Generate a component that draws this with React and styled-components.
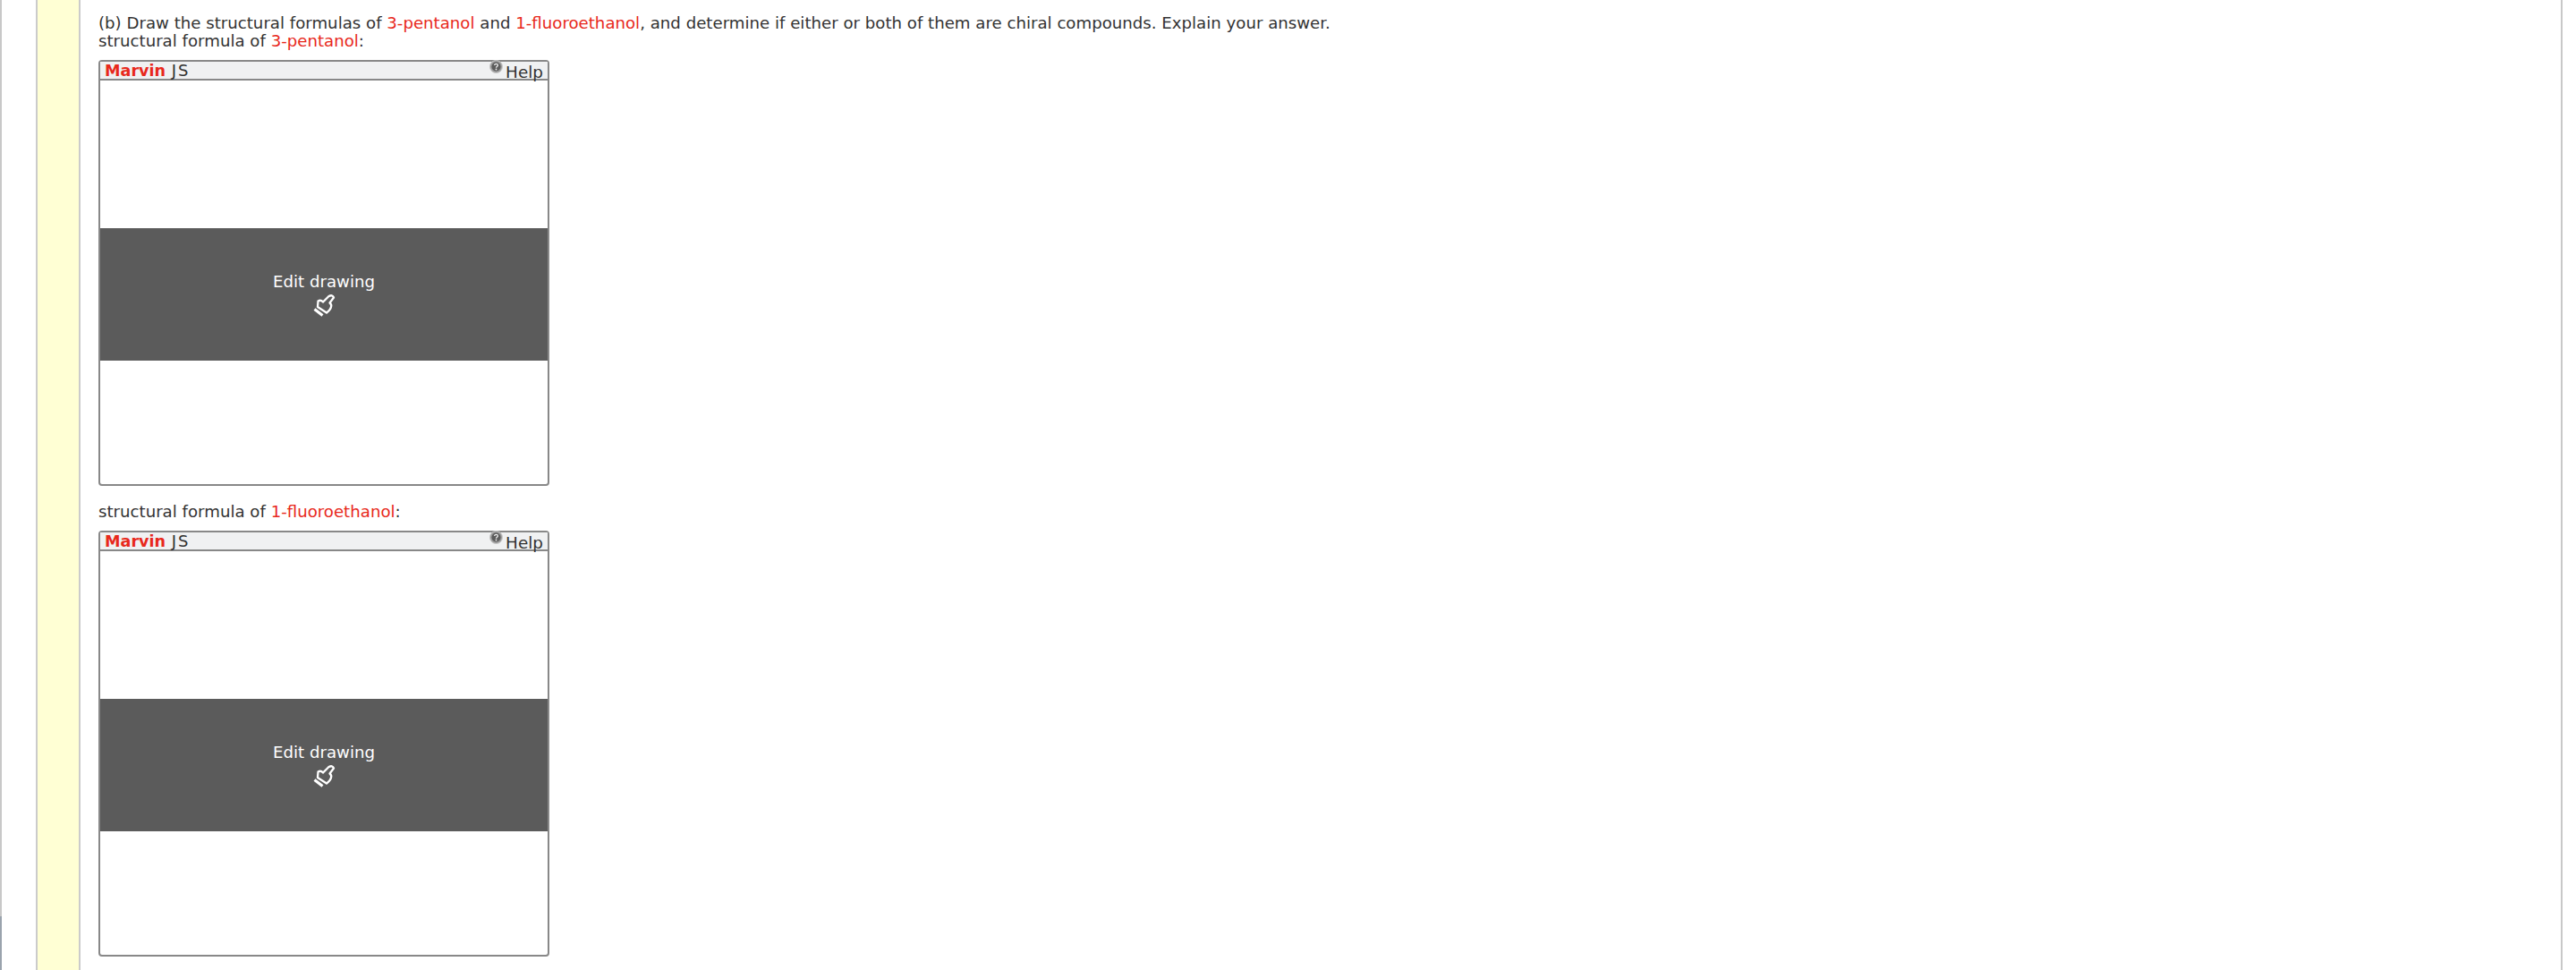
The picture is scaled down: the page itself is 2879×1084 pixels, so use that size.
import styled, { createGlobalStyle } from 'styled-components'

const GlobalStyle = createGlobalStyle`
  html, body {
    margin: 0;
    padding: 0;
    background: #fff;
  }
`

const HelpIcon = () => (
  <StyledHelpSvg viewBox="0 0 15 15">
    <circle cx="7.5" cy="7.5" r="7" fill="#9a9a9a" stroke="#c8c8c8" strokeWidth="1" />
    <circle cx="7.5" cy="7.5" r="5" fill="#5c5c5c" />
    <path d="M5.700 6c0-2.200 3.700-2.200 3.700 0 0 1.300-1.900 1.300-1.900 2.700" fill="none" stroke="#eee" strokeWidth="1.300" />
    <circle cx="7.500" cy="10.500" r="0.900" fill="#eee" />
  </StyledHelpSvg>
)

const HandIcon = () => (
  <StyledHandSvg viewBox="0 0 32 32">
    <path
      d="M9 18 L9.500 11.500 Q12.500 9.500 15 12.500 L21.500 6 Q25.500 4 27 7.500 L22.500 13.500 Q25 15.500 24 18 Q23.500 21 19 24.500 Z"
      fill="none"
      stroke="#fff"
      strokeWidth="2.300"
      strokeLinejoin="round"
    />
    <path d="M5.500 20.500 L14.500 27.500" fill="none" stroke="#fff" strokeWidth="3.200" />
  </StyledHandSvg>
)

const MarvinBox = () => (
  <StyledBox>
    <StyledHeader>
      <StyledBrand>
        <strong>Marvin</strong> <StyledJs>JS</StyledJs>
      </StyledBrand>
      <StyledHelp>
        <HelpIcon />
        <span>Help</span>
      </StyledHelp>
    </StyledHeader>
    <StyledCanvas>
      <StyledEdit>
        <span>Edit drawing</span>
        <HandIcon />
      </StyledEdit>
    </StyledCanvas>
  </StyledBox>
)

const App = () => {
  return (
    <StyledPage>
      <GlobalStyle />
      <StyledGutter />
      <StyledSidebar />
      <StyledContent>
        <StyledText>
          (b) Draw the structural formulas of <StyledRed>3-pentanol</StyledRed> and{' '}
          <StyledRed>1-fluoroethanol</StyledRed>, and determine if either or both of them are chiral
          compounds. Explain your answer.
          <br />
          structural formula of <StyledRed>3-pentanol</StyledRed>:
        </StyledText>
        <MarvinBox />
        <StyledLabel>
          structural formula of <StyledRed>1-fluoroethanol</StyledRed>:
        </StyledLabel>
        <MarvinBox />
      </StyledContent>
    </StyledPage>
  )
}

export default App

const StyledPage = styled.div`
  display: flex;
  width: 2879px;
  height: 1084px;
  overflow: hidden;
  background: #fff;
  font-family: 'DejaVu Sans', Verdana, sans-serif;
  color: #333;
`

const StyledGutter = styled.div`
  width: 40px;
  flex-shrink: 0;
  background: linear-gradient(#c8c8c8, #c8c8c8) 0 0 / 2px 1024px no-repeat,
    linear-gradient(#9aa3ad, #9aa3ad) 0 1024px / 2px 60px no-repeat;
`

const StyledSidebar = styled.div`
  width: 46px;
  flex-shrink: 0;
  background: #ffffd4;
  border-left: 2px solid #cbcbcb;
  border-right: 2px solid #cbcbcb;
`

const StyledContent = styled.div`
  width: 2774px;
  padding: 16px 0 0 20px;
  border-right: 2px solid #c8c8c8;
  box-sizing: border-box;
  flex-shrink: 0;
`

const StyledText = styled.div`
  font-size: 18.17px;
  line-height: 20px;
`

const StyledLabel = styled(StyledText)`
  margin: 19px 0 11px;
`

const StyledRed = styled.span`
  color: #e8291c;
`

const StyledBox = styled.div`
  width: 504px;
  height: 476px;
  margin-top: 11px;
  border: 2px solid #888;
  border-radius: 4px;
  box-sizing: border-box;
  display: flex;
  flex-direction: column;
  background: #fff;
`

const StyledHeader = styled.div`
  height: 19px;
  flex-shrink: 0;
  display: flex;
  align-items: flex-start;
  justify-content: space-between;
  padding: 0 5px;
  background: #f0f1f2;
  border-bottom: 2px solid #888;
`

const StyledBrand = styled.div`
  font-size: 17.6px;
  line-height: 20px;
  word-spacing: 1px;

  strong {
    color: #e8291c;
  }
`

const StyledJs = styled.span`
  font-size: 18px;
  letter-spacing: 2px;
`

const StyledHelp = styled.div`
  display: flex;
  align-items: flex-start;
  gap: 3px;
  font-size: 18.4px;
  line-height: 23px;
`

const StyledHelpSvg = styled.svg`
  width: 15px;
  height: 15px;
  margin-top: -2px;
`

const StyledCanvas = styled.div`
  flex: 1;
  padding-top: 165px;
`

const StyledEdit = styled.div`
  height: 148px;
  background: #5b5b5b;
  color: #fff;
  display: flex;
  flex-direction: column;
  align-items: center;
  padding-top: 50px;
  box-sizing: border-box;
  font-size: 18.17px;
  line-height: 20px;
`

const StyledHandSvg = styled.svg`
  width: 32px;
  height: 32px;
`
